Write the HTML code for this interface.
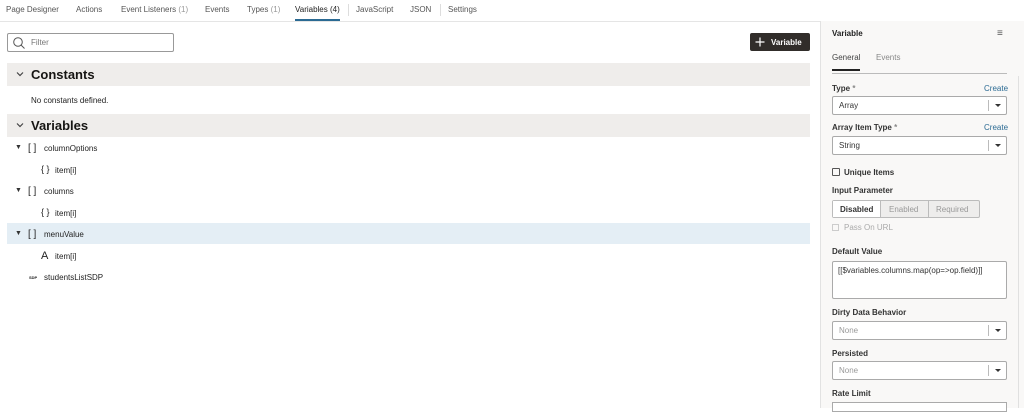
<!DOCTYPE html>
<html><head><style>
*{box-sizing:border-box;margin:0;padding:0}
body{width:1024px;height:408px;overflow:hidden;background:#fff;font-family:"Liberation Sans",sans-serif;font-size:8px;color:#222;position:relative}
.a{position:absolute;white-space:nowrap}
.tab{top:5px;font-size:8px;color:#555}
.sec{left:7px;width:803px;height:23px;background:#efedeb}
.sec span{position:absolute;left:24px;top:4px;font-size:13px;font-weight:bold;color:#161513}
.sec svg{position:absolute;left:9px;top:8px}
.row{font-size:8px;color:#222}
.tri{font-size:7px;color:#333}
.lbl{left:832px;font-size:8px;font-weight:bold;color:#333}
.sel{left:832px;width:175px;height:19px;border:1px solid #aaa;background:#fff;border-radius:2px}
.sel span{position:absolute;left:6px;top:4px;font-size:8px;color:#333}
.sel b{position:absolute;right:0;top:3px;width:18px;height:11px;border-left:1px solid #bbb}
.sel b:after{content:"";position:absolute;left:6px;top:4px;border:3px solid transparent;border-top:3px solid #333}
.cr{font-size:8px;color:#2b6a93}
</style></head><body>
<div class="a tab" style="left:6px">Page Designer</div>
<div class="a tab" style="left:76px">Actions</div>
<div class="a tab" style="left:121px">Event Listeners <span style="color:#999">(1)</span></div>
<div class="a tab" style="left:205px">Events</div>
<div class="a tab" style="left:247px">Types <span style="color:#999">(1)</span></div>
<div class="a tab" style="left:295px;color:#222">Variables (4)</div>
<div class="a" style="left:295px;top:19px;width:45px;height:2px;background:#2b6a93"></div>
<div class="a" style="left:348px;top:4px;width:1px;height:12px;background:#ddd"></div>
<div class="a tab" style="left:356px">JavaScript</div>
<div class="a tab" style="left:410px">JSON</div>
<div class="a" style="left:440px;top:4px;width:1px;height:12px;background:#ddd"></div>
<div class="a tab" style="left:448px">Settings</div>
<div class="a" style="left:0;top:21px;width:1024px;height:1px;background:#e5e5e5"></div>

<div class="a" style="left:7px;top:33px;width:167px;height:19px;border:1px solid #999;border-radius:2px"></div>
<svg class="a" style="left:12px;top:36px" width="14" height="14"><circle cx="6" cy="6" r="4.3" fill="none" stroke="#555" stroke-width="1"/><line x1="9" y1="9" x2="12.5" y2="12.5" stroke="#555"/></svg>
<div class="a" style="left:31px;top:38px;color:#777">Filter</div>
<div class="a" style="left:750px;top:33px;width:60px;height:18px;background:#312d2a;border-radius:2px;color:#fff;font-weight:bold;font-size:8px;padding:5px 0 0 21px">Variable</div>
<svg class="a" style="left:755px;top:37px" width="10" height="10"><path d="M5 0.5V9.5M0.5 5H9.5" stroke="#fff" stroke-width="1.2"/></svg>

<div class="a sec" style="top:63px"><svg width="8" height="6"><path d="M1 1.5L4 4.5L7 1.5" fill="none" stroke="#444" stroke-width="1.2"/></svg><span>Constants</span></div>
<div class="a row" style="left:31px;top:96px">No constants defined.</div>
<div class="a sec" style="top:114px"><svg width="8" height="6"><path d="M1 1.5L4 4.5L7 1.5" fill="none" stroke="#444" stroke-width="1.2"/></svg><span>Variables</span></div>

<div class="a" style="left:7px;top:223px;width:803px;height:21px;background:#e4eef5"></div>
<div class="a tri" style="left:15px;top:144px">&#9660;</div><div class="a row" style="left:28px;top:143px;font-size:10px">[ ]</div><div class="a row" style="left:44px;top:144px">columnOptions</div>
<div class="a row" style="left:41px;top:164px;font-size:9px">{ }</div><div class="a row" style="left:55px;top:166px">item[i]</div>
<div class="a tri" style="left:15px;top:187px">&#9660;</div><div class="a row" style="left:28px;top:186px;font-size:10px">[ ]</div><div class="a row" style="left:44px;top:187px">columns</div>
<div class="a row" style="left:41px;top:207px;font-size:9px">{ }</div><div class="a row" style="left:55px;top:209px">item[i]</div>
<div class="a tri" style="left:15px;top:230px">&#9660;</div><div class="a row" style="left:28px;top:229px;font-size:10px">[ ]</div><div class="a row" style="left:44px;top:230px">menuValue</div>
<div class="a row" style="left:41px;top:250px;font-size:11px">A</div><div class="a row" style="left:55px;top:252px">item[i]</div>
<div class="a row" style="left:29px;top:275px;font-size:4px;font-weight:bold">SDP</div><div class="a row" style="left:44px;top:273px">studentsListSDP</div>

<div class="a" style="left:820px;top:21px;width:204px;height:387px;background:#f9f8f7;border-left:1px solid #e2e2e2"></div>
<div class="a" style="left:832px;top:29px;font-weight:bold;font-size:8px">Variable</div>
<div class="a" style="left:997px;top:28px;font-size:10px;color:#555">&#8801;</div>
<div class="a" style="left:832px;top:53px;color:#444">General</div>
<div class="a" style="left:876px;top:53px;color:#888">Events</div>
<div class="a" style="left:832px;top:69px;width:28px;height:2px;background:#222"></div>
<div class="a" style="left:832px;top:73px;width:175px;height:1px;background:#bbb"></div>
<div class="a" style="left:1018px;top:76px;width:1px;height:332px;background:#e0e0e0"></div>
<div class="a lbl" style="top:84px">Type <span style="color:#888">*</span></div><div class="a cr" style="left:984px;top:84px">Create</div>
<div class="a sel" style="top:96px"><span>Array</span><b></b></div>
<div class="a lbl" style="top:123px">Array Item Type <span style="color:#888">*</span></div><div class="a cr" style="left:984px;top:123px">Create</div>
<div class="a sel" style="top:136px"><span>String</span><b></b></div>
<div class="a" style="left:832px;top:168px;width:8px;height:8px;border:1px solid #555;border-radius:1px"></div>
<div class="a lbl" style="left:844px;top:168px">Unique Items</div>
<div class="a lbl" style="top:186px">Input Parameter</div>
<div class="a" style="left:832px;top:200px;width:148px;height:18px;border:1px solid #bbb;border-radius:2px;background:#eeedec"></div>
<div class="a" style="left:833px;top:201px;width:48px;height:16px;background:#fff;border-right:1px solid #bbb"></div>
<div class="a" style="left:928px;top:201px;width:1px;height:16px;background:#bbb"></div>
<div class="a lbl" style="left:840px;top:205px">Disabled</div>
<div class="a" style="left:889px;top:205px;color:#999">Enabled</div>
<div class="a" style="left:936px;top:205px;color:#999">Required</div>
<div class="a" style="left:832px;top:224px;width:7px;height:7px;border:1px solid #ccc"></div>
<div class="a" style="left:844px;top:223px;color:#aaa">Pass On URL</div>
<div class="a lbl" style="top:247px">Default Value</div>
<div class="a" style="left:832px;top:261px;width:175px;height:38px;border:1px solid #aaa;border-radius:2px;background:#fff"></div>
<div class="a" style="left:838px;top:266px;color:#333">[[$variables.columns.map(op=&gt;op.field)]]</div>
<div class="a lbl" style="top:308px">Dirty Data Behavior</div>
<div class="a sel" style="top:321px"><span style="color:#999">None</span><b></b></div>
<div class="a lbl" style="top:349px">Persisted</div>
<div class="a sel" style="top:361px"><span style="color:#999">None</span><b></b></div>
<div class="a lbl" style="top:389px">Rate Limit</div>
<div class="a" style="left:832px;top:402px;width:175px;height:10px;border:1px solid #aaa;background:#fff"></div>
</body></html>
